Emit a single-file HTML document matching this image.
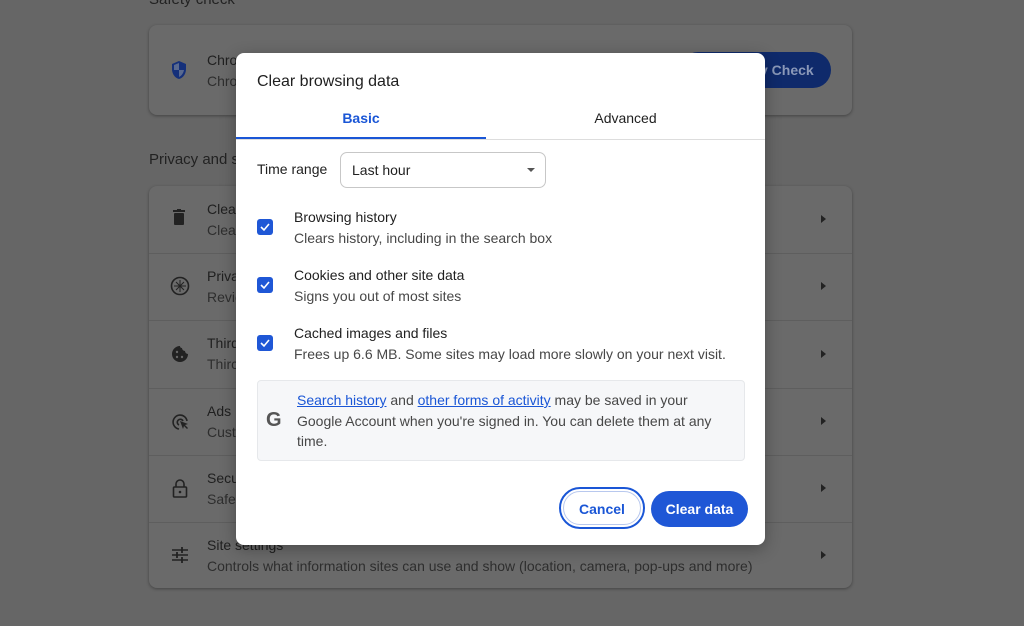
<!DOCTYPE html>
<html><head><meta charset="utf-8"><style>
*{box-sizing:border-box;margin:0;padding:0}
html,body{background:#666}
body{width:1024px;height:626px;font-family:"Liberation Sans",Arial,sans-serif;position:relative;overflow:hidden;color:#1f1f1f}
.a{position:absolute;white-space:nowrap}
.card{position:absolute;background:#6a6a6a;border-radius:8px;box-shadow:0 1px 3px rgba(0,0,0,.35)}
.bt{color:#202020;font-size:14px}
.bs{color:#2e2e2e;font-size:14px}
.sep{position:absolute;left:149px;width:703px;height:1px;background:#5e5e5e}
.tri{position:absolute;left:821px;width:0;height:0;border-top:4px solid transparent;border-bottom:4px solid transparent;border-left:5px solid #222}
.ico{position:absolute;left:170px}
.dlg{position:absolute;left:236px;top:53px;width:529px;height:492px;background:#fff;border-radius:8px;box-shadow:0 4px 16px rgba(0,0,0,.3)}
.cb{position:absolute;left:21px;width:16px;height:16px;background:#1f57d6;border-radius:3px}
.cb svg{position:absolute;left:2px;top:2px}
.t1{position:absolute;left:58px;font-size:14px;color:#1f1f1f;white-space:nowrap}
.t2{position:absolute;left:58px;font-size:14px;color:#474747;white-space:nowrap}
a{color:#1a56d6;text-decoration:underline}
</style></head><body>
<div class="a" style="left:149px;top:-9px;font-size:15px;color:#222">Safety check</div>
<div class="card" style="left:149px;top:25px;width:703px;height:90px"></div>
<svg class="ico" style="top:60px" width="18" height="20" viewBox="0 0 18 20"><path d="M9 1L2 4v5c0 5 3 9 7 10 4-1 7-5 7-10V4z" fill="#15307a"/><path d="M9 3v7H4c0-1 0 0 0-1V5zM9 10h5c-.5 3-2.5 6-5 7z" fill="#5a6a8f"/></svg>
<div class="a bt" style="left:207px;top:52px">Chro</div>
<div class="a bs" style="left:207px;top:73px">Chro</div>
<div class="a" style="left:680px;top:52px;width:151px;height:36px;border-radius:18px;background:#0f2a6b;color:#8a98b8;font-size:14px;font-weight:bold;padding:10px 0 0 80px">y Check</div>
<div class="a" style="left:149px;top:151px;font-size:15px;color:#222">Privacy and s</div>
<div class="card" style="left:149px;top:186px;width:703px;height:402px"></div>
<div class="sep" style="top:253px"></div><div class="sep" style="top:320px"></div><div class="sep" style="top:388px"></div><div class="sep" style="top:455px"></div><div class="sep" style="top:522px"></div>
<svg class="ico" style="top:209px;left:173px" width="12" height="16"><rect x="0" y="1" width="12" height="2" fill="#222"/><rect x="4" y="0" width="4" height="2" fill="#222"/><rect x="1" y="4" width="10" height="12" rx="1" fill="#222"/></svg>
<div class="a bt" style="left:207px;top:201px">Clea</div><div class="a bs" style="left:207px;top:222px">Clea</div><div class="tri" style="top:215px"></div>
<svg class="ico" style="top:276px" width="20" height="20"><circle cx="10" cy="10" r="8.5" fill="none" stroke="#222" stroke-width="1.6"/><path d="M10 4v12M4 10h12M6 6l8 8M14 6l-8 8" stroke="#222" stroke-width="1"/></svg>
<div class="a bt" style="left:207px;top:268px">Priva</div><div class="a bs" style="left:207px;top:289px">Revie</div><div class="tri" style="top:282px"></div>
<svg class="ico" style="top:344px" width="20" height="20"><path d="M10 2a8 8 0 1 0 8 8 3 3 0 0 1-3-3 3 3 0 0 1-3-3 2 2 0 0 1-2-2z" fill="#222"/><circle cx="7" cy="8" r="1.2" fill="#666"/><circle cx="7" cy="13" r="1.2" fill="#666"/><circle cx="12" cy="13" r="1.2" fill="#666"/></svg>
<div class="a bt" style="left:207px;top:335px">Third</div><div class="a bs" style="left:207px;top:356px">Thirc</div><div class="tri" style="top:350px"></div>
<svg class="ico" style="top:412px" width="20" height="20"><path d="M9 17a7 7 0 1 1 8-8M9 13a3 3 0 1 1 4-4" fill="none" stroke="#222" stroke-width="1.6"/><path d="M10 9l8 3-3 1 3 3-1 1-3-3-1 3z" fill="#222"/></svg>
<div class="a bt" style="left:207px;top:403px">Ads</div><div class="a bs" style="left:207px;top:424px">Cust</div><div class="tri" style="top:417px"></div>
<svg class="ico" style="top:479px;left:172px" width="16" height="19"><path d="M4 8V5a4 4 0 0 1 8 0v3" fill="none" stroke="#222" stroke-width="1.6"/><rect x="1.5" y="8" width="13" height="10" rx="1" fill="none" stroke="#222" stroke-width="1.6"/><circle cx="8" cy="13" r="1.3" fill="#222"/></svg>
<div class="a bt" style="left:207px;top:470px">Secu</div><div class="a bs" style="left:207px;top:491px">Safe</div><div class="tri" style="top:484px"></div>
<svg class="ico" style="top:547px;left:172px" width="16" height="16"><path d="M0 3h16M0 8h16M0 13h16" stroke="#222" stroke-width="1.5"/><path d="M10 0v6M5 5v6M10 10v6" stroke="#222" stroke-width="1.8"/></svg>
<div class="a bt" style="left:207px;top:537px">Site settings</div><div class="a bs" style="left:207px;top:558px">Controls what information sites can use and show (location, camera, pop-ups and more)</div><div class="tri" style="top:551px"></div>

<div class="dlg">
<div class="a" style="left:21px;top:20px;font-size:16px;color:#1f1f1f">Clear browsing data</div>
<div class="a" style="left:0;top:57px;width:250px;text-align:center;font-size:14px;font-weight:bold;color:#1a56d6">Basic</div>
<div class="a" style="left:250px;top:57px;width:279px;text-align:center;font-size:14px;color:#1f1f1f">Advanced</div>
<div class="a" style="left:0;top:86px;width:529px;height:1px;background:#ddd"></div>
<div class="a" style="left:0;top:84px;width:250px;height:2px;background:#1a56d6"></div>
<div class="a" style="left:21px;top:108px;font-size:14px;color:#1f1f1f">Time range</div>
<div class="a" style="left:104px;top:99px;width:206px;height:36px;border:1px solid #c7c7c7;border-radius:7px;font-size:14px;padding:9px 0 0 11px;color:#1f1f1f">Last hour</div>
<div class="a" style="left:291px;top:115px;border-left:4px solid transparent;border-right:4px solid transparent;border-top:4px solid #555"></div>
<div class="cb" style="top:166px"><svg width="12" height="12"><path d="M2 6l3 3 5-6" fill="none" stroke="#fff" stroke-width="1.6"/></svg></div>
<div class="t1" style="top:156px">Browsing history</div><div class="t2" style="top:177px">Clears history, including in the search box</div>
<div class="cb" style="top:224px"><svg width="12" height="12"><path d="M2 6l3 3 5-6" fill="none" stroke="#fff" stroke-width="1.6"/></svg></div>
<div class="t1" style="top:214px">Cookies and other site data</div><div class="t2" style="top:235px">Signs you out of most sites</div>
<div class="cb" style="top:282px"><svg width="12" height="12"><path d="M2 6l3 3 5-6" fill="none" stroke="#fff" stroke-width="1.6"/></svg></div>
<div class="t1" style="top:272px">Cached images and files</div><div class="t2" style="top:293px">Frees up 6.6 MB. Some sites may load more slowly on your next visit.</div>
<div class="a" style="left:21px;top:327px;width:488px;height:81px;background:#f6f7f9;border:1px solid #e6e8eb;border-radius:4px"></div>
<div class="a" style="left:30px;top:356px;font-size:20px;font-weight:bold;color:#555">G</div>
<div class="a" style="left:61px;top:337px;font-size:14px;line-height:20.5px;color:#474747;white-space:normal;width:422px"><a>Search history</a> and <a>other forms of activity</a> may be saved in your<br>Google Account when you're signed in. You can delete them at any time.</div>
<div class="a" style="left:323px;top:434px;width:86px;height:42px;border:2px solid #1a56d6;border-radius:21px"></div>
<div class="a" style="left:327px;top:438px;width:78px;height:34px;border:1px solid #b8c8ee;border-radius:17px;text-align:center;font-size:14px;font-weight:bold;color:#1a56d6;padding-top:9px">Cancel</div>
<div class="a" style="left:415px;top:438px;width:97px;height:36px;background:#1f57d6;border-radius:18px;text-align:center;font-size:14px;font-weight:bold;color:#fff;padding-top:10px">Clear data</div>
</div>
</body></html>
